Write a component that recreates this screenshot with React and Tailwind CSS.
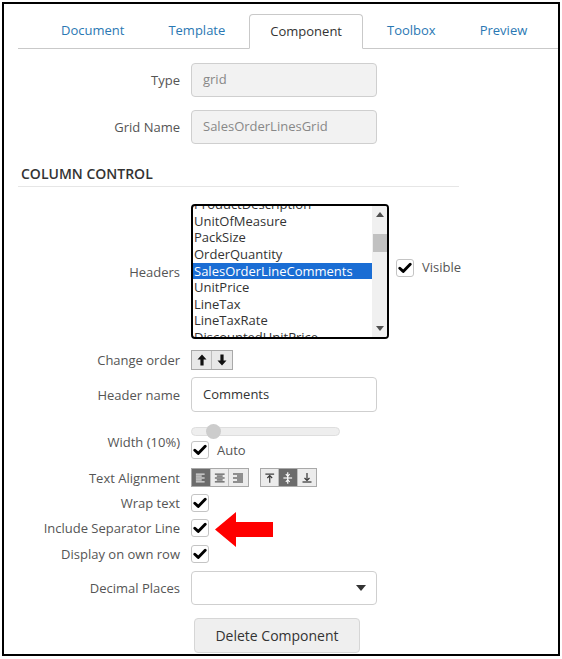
import React from 'react';

const tabs = ['Document', 'Template', 'Component', 'Toolbox', 'Preview'];

const headers = [
  'ProductDescription',
  'UnitOfMeasure',
  'PackSize',
  'OrderQuantity',
  'SalesOrderLineComments',
  'UnitPrice',
  'LineTax',
  'LineTaxRate',
  'DiscountedUnitPrice',
];

const Check = () => (
  <div className="w-[18px] h-[18px] rounded-[3px] border border-[#c4c4c4] bg-white flex items-center justify-center shrink-0">
    <svg width="14" height="12" viewBox="0 0 14 12">
      <path d="M1.8 6.2 L5.2 9.4 L12.2 2.2" fill="none" stroke="#000" strokeWidth="2.9" strokeLinecap="round" strokeLinejoin="round" />
    </svg>
  </div>
);

const Label = ({ children }) => (
  <div className="w-[176px] text-right text-[13px] leading-[18px] text-[#555] shrink-0">{children}</div>
);

const Row = ({ label, className = '', children }) => (
  <div className={`flex items-center ${className}`}>
    <Label>{label}</Label>
    <div className="ml-[11px] flex items-center">{children}</div>
  </div>
);

const AlignIcon = ({ kind, active }) => {
  const c = active ? '#fff' : '#333';
  const lines = {
    left: [[4, 13], [4, 10], [4, 13], [4, 10], [4, 13]],
    center: [[4, 14], [6, 12], [4, 14], [6, 12], [4, 14]],
    right: [[4, 14], [8, 14], [4, 14], [8, 14], [4, 14]],
  }[kind];
  return (
    <svg width="18" height="18" viewBox="0 0 18 18">
      {lines.map(([a, b], i) => (
        <line key={i} x1={a} x2={b} y1={5 + i * 2} y2={5 + i * 2} stroke={c} strokeWidth="1" />
      ))}
    </svg>
  );
};

const VAlignIcon = ({ kind, active }) => {
  const c = active ? '#fff' : '#333';
  if (kind === 'top')
    return (
      <svg width="18" height="18" viewBox="0 0 18 18">
        <line x1="4.5" x2="13.5" y1="5" y2="5" stroke={c} strokeWidth="1.2" />
        <line x1="9" x2="9" y1="7" y2="14" stroke={c} strokeWidth="1.2" />
        <path d="M6.5 9 L9 6.5 L11.5 9" fill="none" stroke={c} strokeWidth="1.2" />
      </svg>
    );
  if (kind === 'middle')
    return (
      <svg width="18" height="18" viewBox="0 0 18 18">
        <line x1="4.5" x2="13.5" y1="9" y2="9" stroke={c} strokeWidth="1.2" />
        <line x1="9" x2="9" y1="3" y2="15" stroke={c} strokeWidth="1.2" />
        <path d="M7 5 L9 7 L11 5 M7 13 L9 11 L11 13" fill="none" stroke={c} strokeWidth="1.2" />
      </svg>
    );
  return (
    <svg width="18" height="18" viewBox="0 0 18 18">
      <line x1="4.5" x2="13.5" y1="13" y2="13" stroke={c} strokeWidth="1.2" />
      <line x1="9" x2="9" y1="4" y2="11" stroke={c} strokeWidth="1.2" />
      <path d="M6.5 9 L9 11.5 L11.5 9" fill="none" stroke={c} strokeWidth="1.2" />
    </svg>
  );
};

const BtnGroup = ({ children }) => (
  <div className="flex border border-[#a9a9a9] h-[19px]">{children}</div>
);

const GroupBtn = ({ active, last, children }) => (
  <div
    className={`w-[18.5px] h-full flex items-center justify-center ${last ? '' : 'border-r border-[#bdbdbd]'} ${
      active ? 'bg-[#6b6b6b]' : 'bg-[#ececec]'
    }`}
  >
    {children}
  </div>
);

export default function App() {
  return (
    <div className="p-[2px] bg-white" style={{ fontFamily: '"Open Sans", "Liberation Sans", sans-serif' }}>
      <div className="w-[558px] h-[654px] border-2 border-black bg-white">
        {/* tabs */}
        <div className="ml-[14px] mt-[10px] h-[35px] border-b border-[#c9c9c9] flex items-end pl-[23px] gap-[4px]">
          {tabs.map((t) => (
            <div
              key={t}
              className={`h-[35px] px-[20px] flex items-center text-[13px] ${
                t === 'Component'
                  ? 'border border-[#c9c9c9] border-b-white bg-white rounded-t-[4px] text-[#333] -mb-px h-[35px]'
                  : 'text-[#2a78b3]'
              }`}
            >
              {t}
            </div>
          ))}
        </div>

        <Row label="Type" className="mt-[14px]">
          <div className="w-[186px] h-[34px] rounded-[4px] border border-[#cfcfcf] bg-[#f2f2f2] flex items-center pl-[11px] text-[13px] text-[#888]">
            grid
          </div>
        </Row>
        <Row label="Grid Name" className="mt-[13px]">
          <div className="w-[186px] h-[34px] rounded-[4px] border border-[#cfcfcf] bg-[#f2f2f2] flex items-center pl-[11px] text-[13px] text-[#888]">
            SalesOrderLinesGrid
          </div>
        </Row>

        <div className="ml-[14px] mt-[20px] w-[441px] pl-[3px] pb-[2px] border-b border-[#e6e6e6] text-[14px] font-semibold text-[#333] leading-[20px]">
          COLUMN CONTROL
        </div>

        {/* headers */}
        <div className="flex items-center mt-[17px]">
          <Label>Headers</Label>
          <div className="ml-[11px] w-[198px] h-[135px] border-2 border-black rounded-[4px] flex overflow-hidden bg-white">
            <div className="flex-1 overflow-hidden">
              <div className="mt-[-10px]">
                {headers.map((h) => (
                  <div
                    key={h}
                    className={`h-[16.65px] leading-[16.65px] pl-[1px] text-[13px] whitespace-nowrap ${
                      h === 'SalesOrderLineComments' ? 'bg-[#1a6dd4] text-white' : 'text-[#333]'
                    }`}
                  >
                    {h}
                  </div>
                ))}
              </div>
            </div>
            <div className="w-[15px] bg-[#f0f0f0] flex flex-col items-center">
              <svg width="8" height="5" viewBox="0 0 8 5" className="mt-[6px]">
                <path d="M0 5 L4 0 L8 5 Z" fill="#505050" />
              </svg>
              <div className="w-[14px] h-[18px] bg-[#c1c1c1] mt-[17px]" />
              <div className="flex-1" />
              <svg width="8" height="5" viewBox="0 0 8 5" className="mb-[6px]">
                <path d="M0 0 L4 5 L8 0 Z" fill="#505050" />
              </svg>
            </div>
          </div>
          <div className="ml-[7px] mb-[8px] flex items-center">
            <Check />
            <span className="ml-[8px] text-[13px] text-[#555]">Visible</span>
          </div>
        </div>

        <Row label="Change order" className="mt-[11px]">
          <div className="flex border border-[#a9a9a9] h-[20px]">
            <div className="w-[20px] bg-[#e8e8e8] border-r border-[#bdbdbd] flex items-center justify-center">
              <svg width="10" height="12" viewBox="0 0 10 12">
                <path d="M5 0.5 L9.5 5.5 L6.6 5.5 L6.6 11.5 L3.4 11.5 L3.4 5.5 L0.5 5.5 Z" fill="#111" />
              </svg>
            </div>
            <div className="w-[20px] bg-[#e8e8e8] flex items-center justify-center">
              <svg width="10" height="12" viewBox="0 0 10 12">
                <path d="M5 11.5 L9.5 6.5 L6.6 6.5 L6.6 0.5 L3.4 0.5 L3.4 6.5 L0.5 6.5 Z" fill="#111" />
              </svg>
            </div>
          </div>
        </Row>

        <Row label="Header name" className="mt-[7px]">
          <div className="w-[186px] h-[35px] rounded-[4px] border border-[#cfcfcf] bg-white flex items-center pl-[11px] text-[13px] text-[#333]">
            Comments
          </div>
        </Row>

        <div className="flex items-center mt-[12px]">
          <Label>Width (10%)</Label>
          <div className="ml-[11px] flex flex-col">
            <div className="relative w-[149px] h-[9px] rounded-full bg-[#eeeeee] border border-[#dedede] mt-[3px]">
              <div className="absolute left-[14px] top-[-4px] w-[15px] h-[15px] rounded-full bg-[#cccccc]" />
            </div>
            <div className="flex items-center mt-[5px]">
              <Check />
              <span className="ml-[8px] text-[13px] leading-[18px] text-[#555]">Auto</span>
            </div>
          </div>
        </div>

        <Row label="Text Alignment" className="mt-[9px]">
          <BtnGroup>
            <GroupBtn active>
              <AlignIcon kind="left" active />
            </GroupBtn>
            <GroupBtn>
              <AlignIcon kind="center" />
            </GroupBtn>
            <GroupBtn last>
              <AlignIcon kind="right" />
            </GroupBtn>
          </BtnGroup>
          <div className="ml-[11px]">
            <BtnGroup>
              <GroupBtn>
                <VAlignIcon kind="top" />
              </GroupBtn>
              <GroupBtn active>
                <VAlignIcon kind="middle" active />
              </GroupBtn>
              <GroupBtn last>
                <VAlignIcon kind="bottom" />
              </GroupBtn>
            </BtnGroup>
          </div>
        </Row>

        <Row label="Wrap text" className="mt-[7px]">
          <Check />
        </Row>
        <div className="relative">
          <Row label="Include Separator Line" className="mt-[7px]">
            <Check />
          </Row>
          <svg width="59" height="35" viewBox="0 0 59 35" className="absolute left-[211px] top-[-7px]">
            <path d="M0 17.5 L21 0 L21 10 L58 10 L58 25 L21 25 L21 35 Z" fill="#ff0000" />
          </svg>
        </div>
        <Row label="Display on own row" className="mt-[8px]">
          <Check />
        </Row>

        <Row label="Decimal Places" className="mt-[8px]">
          <div className="w-[186px] h-[34px] rounded-[4px] border border-[#cfcfcf] bg-white flex items-center justify-end pr-[10px]">
            <svg width="10" height="6" viewBox="0 0 10 6">
              <path d="M0 0 L10 0 L5 6 Z" fill="#333" />
            </svg>
          </div>
        </Row>

        <div className="flex mt-[13px]">
          <div className="w-[176px]" />
          <div className="ml-[14px] w-[166px] h-[35px] rounded-[4px] border border-[#d6d6d6] bg-[#efefef] flex items-center justify-center text-[14px] text-[#333]">
            Delete Component
          </div>
        </div>
      </div>
    </div>
  );
}
